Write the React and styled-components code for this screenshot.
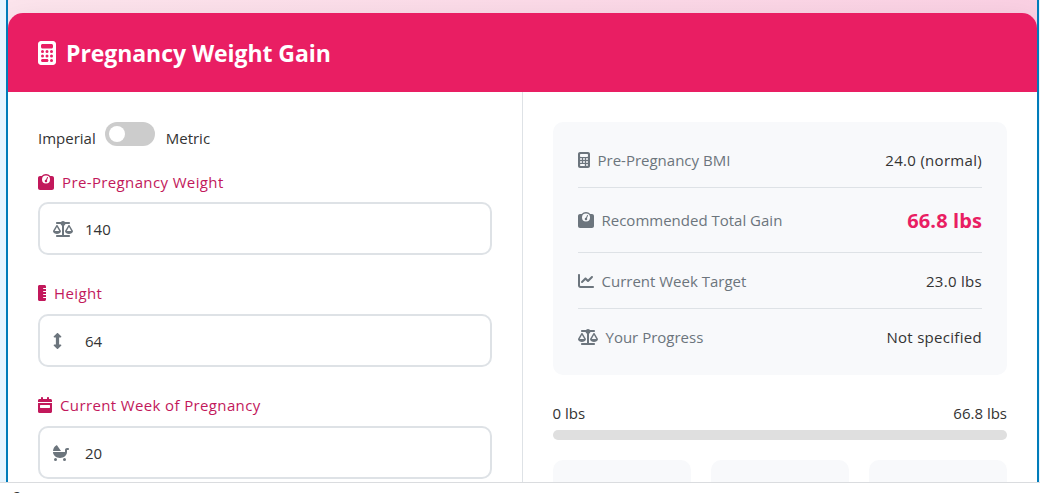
import React, { useState } from 'react';
import styled, { createGlobalStyle } from 'styled-components';
import {
  FaCalculator,
  FaWeightScale,
  FaScaleBalanced,
  FaRulerVertical,
  FaCalendarWeek,
  FaBabyCarriage,
  FaChartLine,
} from 'react-icons/fa6';

// double arrow with a thick shaft
const HeightArrow = () => (
  <svg viewBox="0 0 256 512" fill="currentColor">
    <path d="M28 144C18 144 9 138 6 129C3 120 5 110 11 103L110 8C120-2 136-2 146 8L245 103C251 110 253 120 250 129C247 138 238 144 228 144H180V368H228C238 368 247 374 250 383C253 392 251 402 245 409L146 504C136 514 120 514 110 504L11 409C5 402 3 392 6 383C9 374 18 368 28 368H76V144Z" />
  </svg>
);

// icon widths follow the glyph's own proportions at 16px height
const fields = [
  {
    name: 'weight',
    label: 'Pre-Pregnancy Weight',
    LabelIcon: FaWeightScale,
    labelIconWidth: 16,
    InputIcon: FaScaleBalanced,
    inputIconWidth: 20,
  },
  {
    name: 'height',
    label: 'Height',
    LabelIcon: FaRulerVertical,
    labelIconWidth: 8,
    InputIcon: HeightArrow,
    inputIconWidth: 9,
  },
  {
    name: 'week',
    label: 'Current Week of Pregnancy',
    LabelIcon: FaCalendarWeek,
    labelIconWidth: 14,
    InputIcon: FaBabyCarriage,
    inputIconWidth: 16,
  },
];

const results = [
  {
    label: 'Pre-Pregnancy BMI',
    value: '24.0 (normal)',
    Icon: FaCalculator,
    iconWidth: 12,
  },
  {
    label: 'Recommended Total Gain',
    value: '66.8 lbs',
    Icon: FaWeightScale,
    iconWidth: 16,
    highlight: true,
  },
  {
    label: 'Current Week Target',
    value: '23.0 lbs',
    Icon: FaChartLine,
    iconWidth: 16,
  },
  {
    label: 'Your Progress',
    value: 'Not specified',
    Icon: FaScaleBalanced,
    iconWidth: 20,
  },
];

const App = () => {
  const [metric, setMetric] = useState(false);
  const [values, setValues] = useState({
    weight: '140',
    height: '64',
    week: '20',
  });

  const handleChange = (e) => {
    setValues({ ...values, [e.target.name]: e.target.value });
  };

  return (
    <Page>
      <GlobalStyle />
      <Frame>
        <Calculator>
          <Card>
            <Header>
              <FaCalculator />
              <h1>Pregnancy Weight Gain</h1>
            </Header>
            <Columns>
              <FormColumn>
                <UnitRow>
                  <span>Imperial</span>
                  <Toggle
                    type="button"
                    aria-label="Use metric units"
                    $on={metric}
                    onClick={() => setMetric(!metric)}
                  />
                  <span>Metric</span>
                </UnitRow>
                {fields.map((field) => (
                  <Field key={field.name}>
                    <Label htmlFor={field.name} $icon={field.labelIconWidth}>
                      <field.LabelIcon />
                      {field.label}
                    </Label>
                    <InputBox>
                      <IconSlot $icon={field.inputIconWidth}>
                        <field.InputIcon />
                      </IconSlot>
                      <Input
                        id={field.name}
                        name={field.name}
                        value={values[field.name]}
                        onChange={handleChange}
                      />
                    </InputBox>
                  </Field>
                ))}
              </FormColumn>
              <ResultColumn>
                <ResultCard>
                  {results.map(({ label, value, Icon, iconWidth, highlight }) => (
                    <ResultRow key={label} $tall={highlight}>
                      <ResultLabel $icon={iconWidth}>
                        <Icon />
                        {label}
                      </ResultLabel>
                      <ResultValue $highlight={highlight}>{value}</ResultValue>
                    </ResultRow>
                  ))}
                </ResultCard>
                <RangeLabels>
                  <span>0 lbs</span>
                  <span>66.8 lbs</span>
                </RangeLabels>
                <Track />
                <Tiles>
                  <Tile />
                  <Tile />
                  <Tile />
                </Tiles>
              </ResultColumn>
            </Columns>
          </Card>
        </Calculator>
      </Frame>
      <Footer>?</Footer>
    </Page>
  );
};

const GlobalStyle = createGlobalStyle`
  * {
    box-sizing: border-box;
  }

  body {
    margin: 0;
    overflow: hidden;
    background: #fff;
    color: #333;
    font-family: 'Open Sans', 'Noto Sans', sans-serif;
    font-size: 15px;
    line-height: 24px;
  }

  svg {
    display: block;
    flex-shrink: 0;
  }
`;

const Page = styled.div`
  display: flex;
  flex-direction: column;
  height: 493px;
  overflow: hidden;
`;

const Frame = styled.main`
  height: 482px;
  flex-shrink: 0;
  padding: 0 1px 0 6px;
  overflow: hidden;
  background: #e6f5ff;
`;

const Calculator = styled.section`
  height: 600px;
  padding-top: 13px;
  border: solid #007cba;
  border-width: 0 2px;
  background: linear-gradient(135deg, #fce4ec, #f8bbd9);
  background-size: 100% 1100px;
  overflow: hidden;
`;

const Card = styled.div`
  border-radius: 15px 15px 0 0;
  box-shadow: 0 10px 30px rgba(0, 0, 0, 0.1);
`;

const Header = styled.header`
  display: flex;
  align-items: center;
  gap: 10px;
  height: 79px;
  padding: 1px 30px 0;
  border-radius: 15px 15px 0 0;
  background: #e91e63;
  color: #fff;
  font-size: 24px;

  svg {
    width: 18px;
    height: 24px;
  }

  h1 {
    margin: 0;
    font-size: 23px;
    font-weight: 700;
    letter-spacing: -0.06px;
  }
`;

const Columns = styled.div`
  display: grid;
  grid-template-columns: 1fr 1fr;
  height: 508px;
  background: #fff;
`;

const FormColumn = styled.form`
  padding: 30px;
  border-right: 1px solid #dee2e6;
`;

const UnitRow = styled.div`
  display: flex;
  height: 47.6px;

  span {
    padding-top: 4px;
  }
`;

const Toggle = styled.button`
  display: flex;
  justify-content: ${(props) => (props.$on ? 'flex-end' : 'flex-start')};
  width: 50px;
  height: 24px;
  margin: 0 11px 0 9px;
  padding: 4px;
  border: 0;
  border-radius: 12px;
  background: ${(props) => (props.$on ? '#e91e63' : '#ccc')};

  &::before {
    content: '';
    width: 16px;
    height: 16px;
    border-radius: 50%;
    background: #fff;
  }
`;

const Field = styled.div`
  height: 111.8px;
`;

const Label = styled.label`
  display: flex;
  align-items: center;
  gap: 8px;
  height: 24px;
  margin-bottom: 8.4px;
  color: #c2185b;
  font-weight: 500;
  letter-spacing: 0.37px;

  svg {
    width: ${(props) => props.$icon}px;
    height: 16px;
  }
`;

const InputBox = styled.div`
  display: flex;
  align-items: center;
  height: 53px;
  padding: 1px 13px 0;
  border: 2px solid #dee2e6;
  border-radius: 10px;
`;

const IconSlot = styled.span`
  width: 32px;
  color: #6c757d;

  svg {
    width: ${(props) => props.$icon}px;
    height: 16px;
  }
`;

const Input = styled.input`
  flex: 1;
  min-width: 0;
  padding: 0;
  border: 0;
  outline: 0;
  background: none;
  color: #333;
  font: inherit;
`;

const ResultColumn = styled.div`
  padding: 30px;
`;

const ResultCard = styled.div`
  height: 253px;
  padding: 10px 25px;
  border-radius: 10px;
  background: #f8f9fb;
`;

const ResultRow = styled.div`
  display: flex;
  align-items: center;
  justify-content: space-between;
  height: ${(props) => (props.$tall ? '65px' : '56px')};
  border-bottom: 1px solid #dee2e6;

  &:last-child {
    height: 56px;
    border-bottom-color: transparent;
  }
`;

const ResultLabel = styled.span`
  display: flex;
  align-items: center;
  gap: 8px;
  color: #6c757d;

  svg {
    width: ${(props) => props.$icon}px;
    height: 16px;
  }
`;

const ResultValue = styled.span`
  padding-top: ${(props) => (props.$highlight ? '2px' : '0')};
  color: ${(props) => (props.$highlight ? '#e91e63' : '#333')};
  font-size: ${(props) => (props.$highlight ? '20px' : 'inherit')};
  font-weight: ${(props) => (props.$highlight ? 700 : 500)};
  letter-spacing: ${(props) => (props.$highlight ? '0.1px' : '0.3px')};
`;

const RangeLabels = styled.div`
  display: flex;
  justify-content: space-between;
  margin: 26px 0 5px;
`;

const Track = styled.div`
  height: 10px;
  border-radius: 5px;
  background: #dfdfdf;
`;

const Tiles = styled.div`
  display: grid;
  grid-template-columns: repeat(3, 1fr);
  gap: 20px;
  margin-top: 20px;
`;

const Tile = styled.div`
  height: 90px;
  border-radius: 10px;
  background: #f8f9fb;
`;

const Footer = styled.footer`
  flex: 1;
  padding: 1px 14px 0;
  border-top: 1px solid #dadcdf;
  background: #fff;
  overflow: hidden;
`;

export default App;
